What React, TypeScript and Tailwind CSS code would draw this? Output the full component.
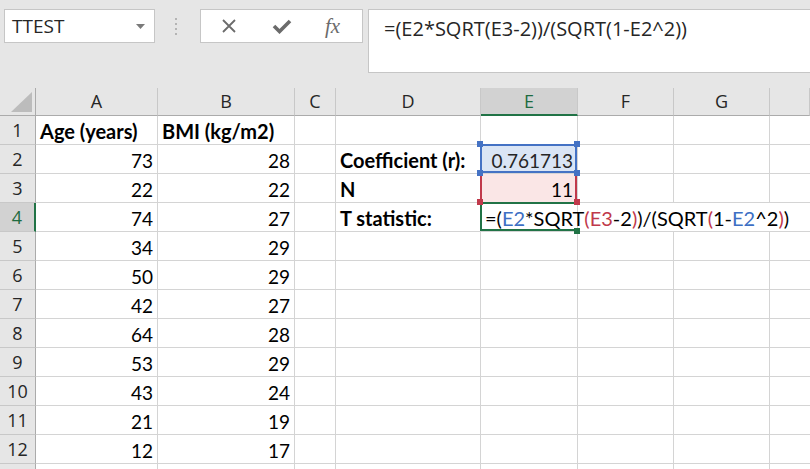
import React from 'react';

const CELL_FONT = { fontFamily: 'Lato, "Liberation Sans", sans-serif' };
const UI_FONT = { fontFamily: '"Open Sans", "Noto Sans", sans-serif' };

const colA = [73, 22, 74, 34, 50, 42, 64, 53, 43, 21, 12];
const colB = [28, 22, 27, 29, 29, 27, 28, 29, 24, 19, 17];
const letters = ['A', 'B', 'C', 'D', 'E', 'F', 'G', ''];

function Handle({ pos, color }: { pos: string; color: string }) {
  return <span className={`absolute w-[6px] h-[6px] z-20 ${pos} ${color}`} />;
}

function Formula() {
  const blue = 'text-[#3d6fc4]';
  const red = 'text-[#c0394b]';
  return (
    <span className="whitespace-nowrap">
      =(<span className={blue}>E2</span>*SQRT<span className={red}>(E3</span>-2<span className={red}>)</span>)/(SQRT
      <span className={red}>(</span>1-<span className={blue}>E2</span>^2<span className={red}>)</span>)
    </span>
  );
}

function TopBar() {
  return (
    <div className="h-[88px] bg-[#e6e6e6] flex items-start pt-[9px] pl-[4px]" style={UI_FONT}>
      <div className="w-[151px] h-[34px] bg-white border border-[#c6c6c6] flex items-center justify-between pl-[7px] pr-[9px]">
        <span className="text-[19px] text-[#262626] leading-none">TTEST</span>
        <svg width="9" height="5" viewBox="0 0 9 5"><path d="M0 0h9L4.5 5z" fill="#7a7a7a" /></svg>
      </div>
      <div className="ml-[20px] mt-[9px] flex flex-col gap-[3px]">
        {[0, 1, 2, 3].map(i => <span key={i} className="w-[2px] h-[2px] bg-[#b4b4b4]" />)}
      </div>
      <div className="ml-[23px] w-[163px] h-[34px] bg-white border border-[#c6c6c6] flex items-center">
        <svg className="ml-[20px]" width="16" height="16" viewBox="0 0 16 16">
          <path d="M2 2L14 14M14 2L2 14" stroke="#6b6b6b" strokeWidth="1.8" />
        </svg>
        <svg className="ml-[35px]" width="20" height="16" viewBox="0 0 20 16">
          <path d="M2 8L7.5 13.5L18 3" stroke="#6b6b6b" strokeWidth="3.6" fill="none" />
        </svg>
        <span className="ml-[33px] text-[21px] italic text-[#6b6b6b] leading-none" style={{ fontFamily: '"Liberation Serif", "DejaVu Serif", serif' }}>
          fx
        </span>
      </div>
      <div className="ml-[5px] flex-1 h-[64px] bg-white border-l border-t border-b border-[#c6c6c6] pl-[15px] pt-[4px]">
        <span className="text-[20px] text-[#262626]">=(E2*SQRT(E3-2))/(SQRT(1-E2^2))</span>
      </div>
    </div>
  );
}

function HeaderRow() {
  return (
    <div className="contents" style={UI_FONT}>
      <div className="h-[28px] bg-[#e6e6e6] border-r border-b border-[#ababab] relative">
        <svg className="absolute right-[3px] bottom-[3px]" width="21" height="20" viewBox="0 0 21 20">
          <path d="M21 0V20H0z" fill="#bcbcbc" />
        </svg>
      </div>
      {letters.map((l, i) => (
        <div
          key={i}
          className={
            l === 'E'
              ? 'h-[28px] bg-[#d2d2d2] border-r border-[#c8c8c8] border-b-2 border-b-[#217346] flex items-center justify-center text-[18px] text-[#1e6b40]'
              : 'h-[28px] bg-[#e6e6e6] border-r border-[#c8c8c8] border-b border-b-[#ababab] flex items-center justify-center text-[18px] text-[#262626]'
          }
        >
          {l}
        </div>
      ))}
    </div>
  );
}

type CellProps = { children?: React.ReactNode; right?: boolean; bold?: boolean; noRight?: boolean; className?: string };

function Cell({ children, right, bold, noRight, className = '' }: CellProps) {
  return (
    <div
      className={`h-[29px] border-b border-[#d4d4d4] ${noRight ? '' : 'border-r'} flex items-end pb-[3px] px-[4px] text-[20px] text-black leading-none relative ${right ? 'justify-end' : ''} ${bold ? 'font-bold' : ''} ${className}`}
      style={CELL_FONT}
    >
      {children}
    </div>
  );
}

function Num({ children }: { children: React.ReactNode }) {
  return <span className="relative text-[19px]">{children}</span>;
}

function Row({ n }: { n: number }) {
  const sel = n === 4;
  const data = n >= 2 && n <= 12;
  const a = n === 1 ? 'Age (years)' : data ? <Num>{colA[n - 2]}</Num> : '';
  const b = n === 1 ? 'BMI (kg/m2)' : data ? <Num>{colB[n - 2]}</Num> : '';
  const d = n === 2 ? 'Coefficient (r):' : n === 3 ? 'N' : n === 4 ? 'T statistic:' : '';
  return (
    <div className="contents">
      <div
        className={
          sel
            ? 'h-[29px] bg-[#d2d2d2] border-b border-[#c8c8c8] border-r-2 border-r-[#217346] flex items-center justify-center text-[18px] text-[#1e6b40]'
            : 'h-[29px] bg-[#e6e6e6] border-b border-[#c8c8c8] border-r border-r-[#ababab] flex items-center justify-center text-[18px] text-[#262626]'
        }
        style={UI_FONT}
      >
        {n <= 12 ? n : ''}
      </div>
      <Cell right={n !== 1} bold={n === 1}>{a}</Cell>
      <Cell right={n !== 1} bold={n === 1}>{b}</Cell>
      <Cell />
      <Cell bold>{d}</Cell>
      {n === 2 ? (
        <Cell right className="bg-[#dae5f5]">
          <span className="absolute -left-[1px] -top-[1px] right-0 bottom-0 border-2 border-[#4472c4] z-10" />
          <Handle pos="-left-[4px] -top-[4px]" color="bg-[#4472c4]" />
          <Handle pos="-right-[3px] -top-[4px]" color="bg-[#4472c4]" />
          <Handle pos="-left-[4px] -bottom-[3px]" color="bg-[#4472c4]" />
          <Handle pos="-right-[3px] -bottom-[3px]" color="bg-[#4472c4]" />
          <span className="relative text-[19px] text-[#262626]">0.761713</span>
        </Cell>
      ) : n === 3 ? (
        <Cell right className="bg-[#fae6e6]">
          <span className="absolute -left-[1px] top-0 right-0 bottom-0 border-x-2 border-[#c0394b] z-10" />
          <Handle pos="-left-[4px] -bottom-[3px]" color="bg-[#c0394b]" />
          <Handle pos="-right-[3px] -bottom-[3px]" color="bg-[#c0394b]" />
          <Num>11</Num>
        </Cell>
      ) : n === 4 ? (
        <Cell className="z-10 overflow-visible">
          <span className="absolute -left-[1px] -top-[1px] right-0 bottom-0 border-l-2 border-y-2 border-[#217346]" />
          <Handle pos="-right-[3px] -bottom-[3px]" color="bg-[#217346]" />
          <span className="relative"><Formula /></span>
        </Cell>
      ) : (
        <Cell />
      )}
      <Cell noRight={sel} />
      <Cell noRight={sel} />
      <Cell noRight />
    </div>
  );
}

export default function App() {
  return (
    <div className="w-[810px] h-[469px] overflow-hidden bg-white">
      <TopBar />
      <div className="grid grid-cols-[36px_122px_137px_41px_145px_97px_96px_96px_1fr]">
        <HeaderRow />
        {Array.from({ length: 13 }, (_, i) => (
          <Row key={i} n={i + 1} />
        ))}
      </div>
    </div>
  );
}
